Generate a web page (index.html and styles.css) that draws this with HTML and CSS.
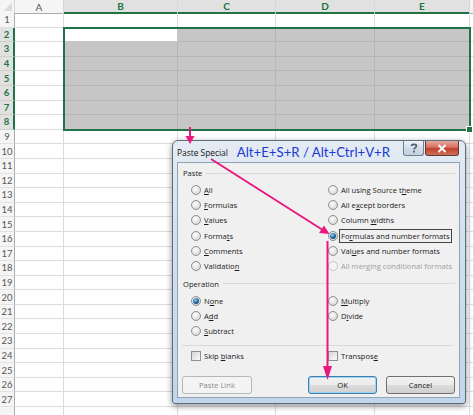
FILE: index.html
```html
<!DOCTYPE html>
<html>
<head>
<meta charset="utf-8">
<link rel="stylesheet" href="styles.css">
</head>
<body>
<div class="sheet">
  <div class="row head"><div class="corner"></div><div>A</div><div class="hs">B</div><div class="hs">C</div><div class="hs">D</div><div class="hs">E</div><div></div></div>
  <div class="row"><div class="rh">1</div><div></div><div></div><div></div><div></div><div></div><div></div></div>
  <div class="row"><div class="rh hs">2</div><div></div><div class="act"></div><div class="s"></div><div class="s"></div><div class="s"></div><div></div></div>
  <div class="row"><div class="rh hs">3</div><div></div><div class="s"></div><div class="s"></div><div class="s"></div><div class="s"></div><div></div></div>
  <div class="row"><div class="rh hs">4</div><div></div><div class="s"></div><div class="s"></div><div class="s"></div><div class="s"></div><div></div></div>
  <div class="row"><div class="rh hs">5</div><div></div><div class="s"></div><div class="s"></div><div class="s"></div><div class="s"></div><div></div></div>
  <div class="row"><div class="rh hs">6</div><div></div><div class="s"></div><div class="s"></div><div class="s"></div><div class="s"></div><div></div></div>
  <div class="row"><div class="rh hs">7</div><div></div><div class="s"></div><div class="s"></div><div class="s"></div><div class="s"></div><div></div></div>
  <div class="row"><div class="rh hs">8</div><div></div><div class="s"></div><div class="s"></div><div class="s"></div><div class="s"></div><div></div></div>
  <div class="row"><div class="rh">9</div><div></div><div></div><div></div><div></div><div></div><div></div></div>
  <div class="row"><div class="rh">10</div><div></div><div></div><div></div><div></div><div></div><div></div></div>
  <div class="row"><div class="rh">11</div><div></div><div></div><div></div><div></div><div></div><div></div></div>
  <div class="row"><div class="rh">12</div><div></div><div></div><div></div><div></div><div></div><div></div></div>
  <div class="row"><div class="rh">13</div><div></div><div></div><div></div><div></div><div></div><div></div></div>
  <div class="row"><div class="rh">14</div><div></div><div></div><div></div><div></div><div></div><div></div></div>
  <div class="row"><div class="rh">15</div><div></div><div></div><div></div><div></div><div></div><div></div></div>
  <div class="row"><div class="rh">16</div><div></div><div></div><div></div><div></div><div></div><div></div></div>
  <div class="row"><div class="rh">17</div><div></div><div></div><div></div><div></div><div></div><div></div></div>
  <div class="row"><div class="rh">18</div><div></div><div></div><div></div><div></div><div></div><div></div></div>
  <div class="row"><div class="rh">19</div><div></div><div></div><div></div><div></div><div></div><div></div></div>
  <div class="row"><div class="rh">20</div><div></div><div></div><div></div><div></div><div></div><div></div></div>
  <div class="row"><div class="rh">21</div><div></div><div></div><div></div><div></div><div></div><div></div></div>
  <div class="row"><div class="rh">22</div><div></div><div></div><div></div><div></div><div></div><div></div></div>
  <div class="row"><div class="rh">23</div><div></div><div></div><div></div><div></div><div></div><div></div></div>
  <div class="row"><div class="rh">24</div><div></div><div></div><div></div><div></div><div></div><div></div></div>
  <div class="row"><div class="rh">25</div><div></div><div></div><div></div><div></div><div></div><div></div></div>
  <div class="row"><div class="rh">26</div><div></div><div></div><div></div><div></div><div></div><div></div></div>
  <div class="row"><div class="rh">27</div><div></div><div></div><div></div><div></div><div></div><div></div></div>
  <div class="row"><div class="rh"></div><div></div><div></div><div></div><div></div><div></div><div></div></div>
</div>
<div class="selbox"></div>

<div class="dialog">
  <div class="titlebar">
    <span class="title">Paste Special</span>
    <span class="hint">Alt+E+S+R / Alt+Ctrl+V+R</span>
    <span class="spacer"></span>
    <span class="help"><svg width="8" height="10" viewBox="0 0 8 10"><path d="M1.5 3 C1.5 0.8 6.5 0.8 6.5 3 C6.5 4.6 4 4.8 4 6.6" fill="none" stroke="#4d6079" stroke-width="1.6"/><rect x="3.1" y="7.7" width="1.8" height="1.8" fill="#4d6079"/></svg></span>
    <span class="close"><svg width="10" height="9" viewBox="0 0 10 9"><path d="M1.5 1 L8.5 8 M8.5 1 L1.5 8" stroke="#fff" stroke-width="2"/></svg></span>
  </div>
  <div class="client">
    <div class="glabel">Paste</div>
    <div class="opts">
      <label class="opt"><span class="radio"></span><span><u>A</u>ll</span></label>
      <label class="opt"><span class="radio"></span><span>All using Source t<u>h</u>eme</span></label>
      <label class="opt"><span class="radio"></span><span><u>F</u>ormulas</span></label>
      <label class="opt"><span class="radio"></span><span>All e<u>x</u>cept borders</span></label>
      <label class="opt"><span class="radio"></span><span><u>V</u>alues</span></label>
      <label class="opt"><span class="radio"></span><span>Column <u>w</u>idths</span></label>
      <label class="opt"><span class="radio"></span><span>Forma<u>t</u>s</span></label>
      <label class="opt"><span class="radio on"></span><span class="focus">Fo<u>r</u>mulas and number formats</span></label>
      <label class="opt"><span class="radio"></span><span><u>C</u>omments</span></label>
      <label class="opt"><span class="radio"></span><span>Val<u>u</u>es and number formats</span></label>
      <label class="opt"><span class="radio"></span><span>Validatio<u>n</u></span></label>
      <label class="opt dis"><span class="radio"></span><span>All mer<u>g</u>ing conditional formats</span></label>
    </div>
    <div class="glabel op">Operation</div>
    <div class="opts">
      <label class="opt"><span class="radio on"></span><span>N<u>o</u>ne</span></label>
      <label class="opt"><span class="radio"></span><span><u>M</u>ultiply</span></label>
      <label class="opt"><span class="radio"></span><span>A<u>d</u>d</span></label>
      <label class="opt"><span class="radio"></span><span>D<u>i</u>vide</span></label>
      <label class="opt"><span class="radio"></span><span><u>S</u>ubtract</span></label>
      <label class="opt"></label>
    </div>
    <div class="sep"></div>
    <div class="opts checks">
      <label class="opt"><span class="check"></span><span>Skip <u>b</u>lanks</span></label>
      <label class="opt"><span class="check"></span><span>Transpos<u>e</u></span></label>
    </div>
    <div class="buttons">
      <span class="btn disabled">Paste Link</span>
      <span class="spacer"></span>
      <span class="btn default">OK</span>
      <span class="btn">Cancel</span>
    </div>
  </div>
</div>

<svg class="arrows" width="474" height="415" viewBox="0 0 474 415">
  <g stroke="#e8197e" stroke-width="2" fill="#e8197e">
    <line x1="190" y1="127" x2="190" y2="137"/>
    <polygon points="185.5,136 194.5,136 190,144" stroke="none"/>
    <line x1="211" y1="159" x2="322" y2="229.5"/>
    <polygon points="324,225.5 319,233 329.5,234" stroke="none"/>
    <line x1="327.5" y1="241" x2="327.5" y2="368"/>
    <polygon points="323,366 332,366 327.5,380" stroke="none"/>
  </g>
</svg>
</body>
</html>
```

FILE: styles.css
```css
* { box-sizing: border-box; margin: 0; padding: 0; }
body {
  margin: 0;
  width: 474px;
  height: 415px;
  overflow: hidden;
  position: relative;
  background: #fff;
}

/* spreadsheet */
.sheet {
  font-family: Lato, "Liberation Sans", sans-serif;
  display: flex;
  flex-direction: column;
}
.row {
  display: grid;
  grid-template-columns: 15px 49px 114px 98px 99px 95px 1fr;
  height: 14.6px;
  flex: none;
}
.row > div {
  border-right: 1px solid #dcdcdc;
  border-bottom: 1px solid #dcdcdc;
}
.row.head { height: 13px; background: #f5f5f5; }
.row.head > div {
  display: flex;
  align-items: center;
  justify-content: center;
  font-size: 10px;
  color: #555;
  border-right: 1px solid #d6d6d6;
  border-bottom: 1px solid #ababab;
}
.row.head > div.hs {
  background: #e1e1e1;
  color: #217346;
  font-weight: bold;
  border-bottom: 2px solid #217346;
}
.row.head .corner {
  background: linear-gradient(135deg, transparent 55%, #dcdcdc 55%) no-repeat 3px 2px / 9px 9px;
}
.row > .rh {
  display: flex;
  align-items: center;
  justify-content: center;
  font-size: 9.5px;
  color: #555;
  background: #f5f5f5;
  border-right: 1px solid #ababab;
  border-bottom: 1px solid #e2e2e2;
}
.row > .rh.hs {
  background: #e1e1e1;
  color: #217346;
  font-weight: bold;
  border-right: 2px solid #217346;
  border-bottom-color: #cfcfcf;
}
.row > .s { background: #c6c6c6; border-color: #b6b6b6; }
.row > .act { background: #fff; border-color: #c6c6c6; }

.selbox {
  position: absolute;
  left: 63px;
  top: 27px;
  width: 408px;
  height: 104px;
  border: 2px solid #217346;
}
.selbox::after {
  content: "";
  position: absolute;
  right: -4px;
  bottom: -4px;
  width: 5px;
  height: 5px;
  background: #217346;
  border: 1px solid #fff;
}

/* dialog */
.dialog {
  position: absolute;
  left: 172px;
  top: 140px;
  width: 294px;
  height: 264px;
  border: 1px solid #5d6d80;
  border-radius: 6px 6px 3px 3px;
  background: linear-gradient(#e4ebf3, #d2dfee 40%, #c3d5ea);
  box-shadow: 0 2px 6px rgba(0, 0, 0, 0.45);
  display: flex;
  flex-direction: column;
  padding: 0 5px 5px 4px;
  font-family: "Open Sans", "Noto Sans", sans-serif;
  color: #1a1a1a;
}
.titlebar {
  height: 21px;
  display: flex;
  align-items: flex-start;
  flex: none;
}
.title {
  font-size: 8.4px;
  margin-top: 6px;
  color: #111;
}
.hint {
  font-family: Lato, "Liberation Sans", sans-serif;
  font-size: 13.2px;
  color: #2039d6;
  margin-left: 9px;
  margin-top: 3px;
}
.spacer { flex: 1; }
.help {
  width: 21px;
  height: 15px;
  border: 1px solid #6f7f92;
  border-top: none;
  border-radius: 0 0 3px 3px;
  background: linear-gradient(#f0f4f9, #d3dce8 50%, #c4d0df);
  display: flex;
  align-items: center;
  justify-content: center;
  margin-right: 1px;
}
.close {
  width: 34px;
  height: 15px;
  border: 1px solid #5e3a36;
  border-top: none;
  border-radius: 0 0 3px 3px;
  background: linear-gradient(#e8a89d, #d6705f 45%, #c0412c 55%, #d0705a);
  display: flex;
  align-items: center;
  justify-content: center;
  margin-right: 1px;
}
.client {
  flex: 1;
  background: #f0f0f0;
  border: 1px solid #8ea2b8;
  display: flex;
  flex-direction: column;
  padding: 3px 4px 0 4px;
  font-size: 7.6px;
}
.glabel {
  height: 14px;
  display: flex;
  align-items: center;
  gap: 4px;
  padding-left: 1px;
}
.glabel::after {
  content: "";
  flex: 1;
  border-top: 1px solid #d8d8d8;
}
.glabel.op { margin-top: 3.4px; }
.opts {
  display: grid;
  grid-template-columns: 137px 1fr;
  grid-auto-rows: 15.2px;
  padding-left: 9px;
  margin-top: 2.4px;
}
.opt {
  display: flex;
  align-items: center;
  gap: 3px;
  white-space: nowrap;
}
.opt.dis { color: #9d9d9d; }
.radio {
  width: 10px;
  height: 10px;
  border-radius: 50%;
  border: 1px solid #8c8f94;
  background: radial-gradient(circle at 40% 35%, #fdfdfd, #dcdcdc 70%, #cfcfcf);
  flex: none;
  display: flex;
  align-items: center;
  justify-content: center;
}
.radio.on::after {
  content: "";
  width: 6px;
  height: 6px;
  border-radius: 50%;
  background: radial-gradient(circle at 40% 35%, #8fd0f4, #1c5f98 55%, #0e2f55);
}
.opt.dis .radio { border-color: #c4c4c4; background: #f4f4f4; }
.focus {
  outline: 1px solid #444;
  outline-offset: 1px;
}
.sep {
  margin-top: 6px;
  border-top: 1px solid #d8d8d8;
  margin-right: 2px;
}
.checks { margin-top: 3px; }
.check {
  width: 10px;
  height: 10px;
  border: 1px solid #8c8f94;
  background: linear-gradient(135deg, #d6d6d6, #fafafa);
  flex: none;
}
.buttons {
  display: flex;
  gap: 9px;
  margin-top: 11.6px;
}
.btn {
  width: 69px;
  height: 18px;
  border: 1px solid #707070;
  border-radius: 3px;
  background: linear-gradient(#f2f2f2, #ebebeb 50%, #dddddd 50%, #cfcfcf);
  display: flex;
  align-items: center;
  justify-content: center;
  font-size: 7.6px;
  color: #1a1a1a;
}
.btn.disabled {
  width: 70px;
  border-color: #b5b8bb;
  background: #f4f4f4;
  color: #8a8a8a;
}
.btn.default {
  border-color: #3c7fb1;
  box-shadow: inset 0 0 0 1px #9fd3f4;
}

.arrows {
  position: absolute;
  left: 0;
  top: 0;
  pointer-events: none;
}
```
